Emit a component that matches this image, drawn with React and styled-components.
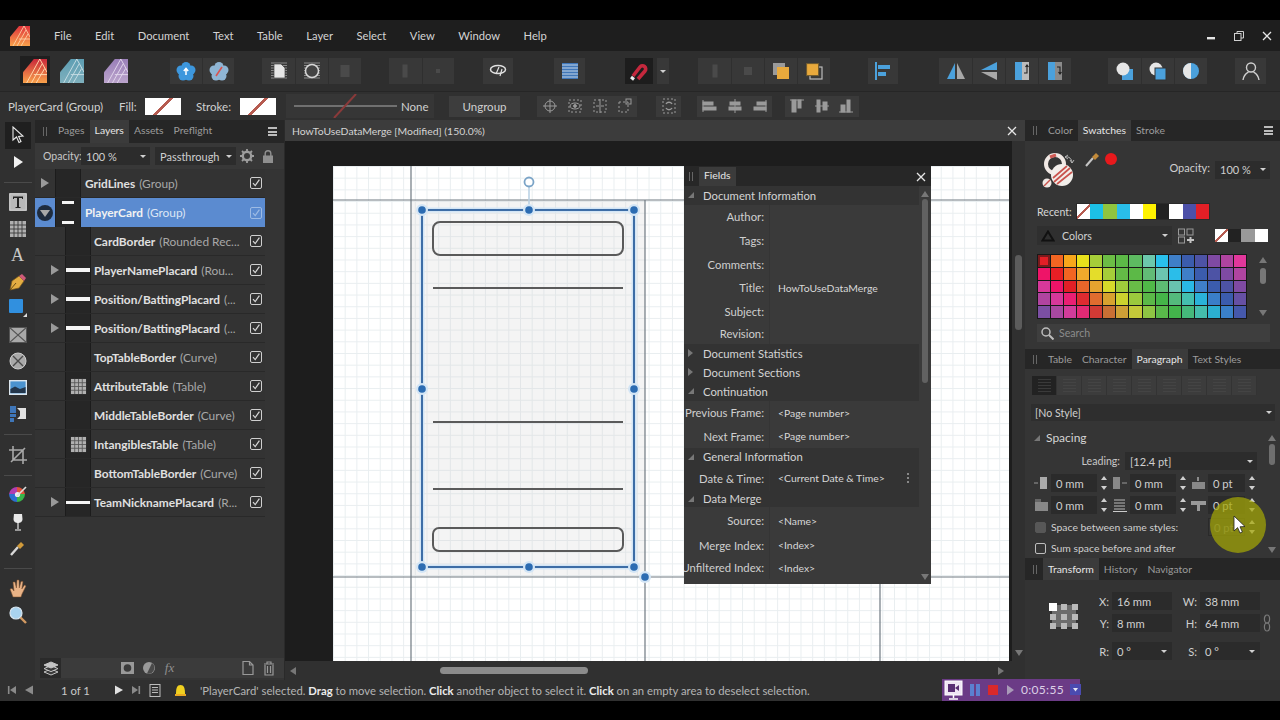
import React from "react";
import styled, { createGlobalStyle } from "styled-components";

const GlobalStyle = createGlobalStyle`
  html, body { margin: 0; padding: 0; background: #000; overflow: hidden; }
  * { box-sizing: border-box; }
  body { font-family: Lato, Roboto, "Liberation Sans", sans-serif; font-size: 11.5px; color: #c8c8c8; }
`;

const Screen = styled.div`
  position: relative;
  width: 1280px;
  height: 720px;
  padding: 20px 0 19px;
  background: #000;
  display: flex;
  flex-direction: column;
  overflow: hidden;
`;

/* ---------- top bars ---------- */
const MenuBar = styled.div`
  height: 31px;
  background: #1e1e1e;
  display: flex;
  align-items: center;
  padding-left: 10px;
  color: #d4d4d4;
  font-size: 11.2px;
`;
const MenuItems = styled.div`
  display: flex;
  gap: 23.5px;
  margin-left: 24px;
`;
const WindowButtons = styled.div`
  margin-left: auto;
  display: flex;
  align-items: center;
  gap: 18px;
  padding-right: 8px;
`;
const Toolbar = styled.div`
  height: 41px;
  background: #2e2e2e;
  display: flex;
  align-items: center;
  padding-left: 20px;
  border-bottom: 1px solid #262626;
`;
const ToolGroup = styled.div`
  display: flex;
  margin-left: ${(p) => p.$ml || 0}px;
  background: #383838;
`;
const ToolBtn = styled.div`
  width: ${(p) => p.$w || 33}px;
  height: 26px;
  display: flex;
  align-items: center;
  justify-content: center;
  background: ${(p) => p.$bg || "transparent"};
  & + & { border-left: 1px solid #2f2f2f; }
`;
const Persona = styled.div`
  width: ${(p) => p.$w}px;
  height: 30px;
  display: flex;
  align-items: center;
  justify-content: center;
  background: ${(p) => (p.$active ? "#1f1f1f" : "transparent")};
`;
const ContextBar = styled.div`
  height: 28px;
  background: #303030;
  display: flex;
  align-items: center;
  padding-left: 8px;
  color: #d0d0d0;
  white-space: nowrap;
`;
const CtxLabel = styled.span`
  width: ${(p) => p.$w}px;
  margin-left: ${(p) => p.$ml || 0}px;
  flex: none;
`;
const NoneSwatch = styled.div`
  width: ${(p) => p.$w || 36}px;
  height: ${(p) => p.$h || 17}px;
  margin-left: ${(p) => p.$ml || 0}px;
  flex: none;
  background: linear-gradient(
    135deg,
    #fff 46%,
    #b65b50 46%,
    #b65b50 54%,
    #fff 54%
  );
`;
const StrokePreview = styled.div`
  width: 148px;
  height: 24px;
  margin-left: 10px;
  background: #363636;
  display: flex;
  align-items: center;
  padding-left: 8px;
  gap: 3px;
`;
const CtxButton = styled.div`
  width: 71px;
  height: 21px;
  margin-left: 15px;
  background: #3d3d3d;
  display: flex;
  align-items: center;
  justify-content: center;
  color: #d0d0d0;
`;
const CtxGroup = styled.div`
  display: flex;
  margin-left: ${(p) => p.$ml || 0}px;
  background: #3a3a3a;
`;
const CtxBtn = styled.div`
  width: ${(p) => p.$w || 25}px;
  height: 21px;
  display: flex;
  align-items: center;
  justify-content: center;
`;

/* ---------- main columns ---------- */
const Main = styled.div`
  height: 560px;
  display: flex;
`;
const ToolColumn = styled.div`
  width: 35px;
  background: #303030;
  padding-top: 2px;
  display: flex;
  flex-direction: column;
  align-items: center;
`;
const ToolSlot = styled.div`
  width: 26px;
  height: 26.5px;
  flex: none;
  display: flex;
  align-items: center;
  justify-content: center;
  background: ${(p) => (p.$active ? "#1f1f1f" : "transparent")};
`;
const SerifGlyph = styled.span`
  font-family: "Liberation Serif", serif;
  font-size: 18px;
  color: #c8c8c8;
`;
const ToolSep = styled.div`
  width: 28px;
  height: 1px;
  margin: 6.5px 0;
  flex: none;
  background: #4a4a4a;
`;
const LayersPanel = styled.div`
  width: 250px;
  background: #343434;
  display: flex;
  flex-direction: column;
  border-right: 1px solid #2a2a2a;
`;
const TabBar = styled.div`
  height: ${(p) => p.$h || 21}px;
  flex: none;
  display: flex;
  align-items: stretch;
  background: #262626;
  padding-left: 6px;
`;
const Grip = styled.div`
  width: 4px;
  height: 9px;
  margin: auto 6px auto 2px;
  border-left: 1px solid #666;
  border-right: 1px solid #666;
  flex: none;
`;
const Tab = styled.div`
  padding: 0 5px ${(p) => p.$lift || 0}px;
  display: flex;
  align-items: center;
  font-size: 10.4px;
  color: ${(p) => (p.$active ? "#e6e6e6" : "#9c9c9c")};
  background: ${(p) => (p.$active ? "#3b3b3b" : "transparent")};
  white-space: nowrap;
`;
const TabMenu = styled.div`
  margin: auto 7px auto auto;
  width: 9px;
  height: 9px;
  border-top: 2px solid #bbb;
  border-bottom: 2px solid #bbb;
  background: linear-gradient(#bbb, #bbb) center / 100% 2px no-repeat;
`;
const LayerOptions = styled.div`
  height: 26px;
  flex: none;
  display: flex;
  align-items: center;
  padding-left: 8px;
  background: #383838;
`;
const OptionLabel = styled.span`
  width: 38px;
  flex: none;
  font-size: 10.5px;
`;
const OptionIcon = styled.span`
  display: flex;
  margin-left: ${(p) => p.$ml}px;
`;
const DarkSelect = styled.div`
  height: ${(p) => p.$h || 18}px;
  width: ${(p) => p.$w}px;
  margin-left: ${(p) => p.$ml || 0}px;
  flex: none;
  display: flex;
  align-items: center;
  justify-content: space-between;
  padding: 0 4px 0 5px;
  background: #2c2c2c;
  color: #cfcfcf;
  font-size: 11px;
`;
const Caret = styled.span`
  width: 0;
  height: 0;
  flex: none;
  border-left: 3px solid transparent;
  border-right: 3px solid transparent;
  border-top: 3.5px solid #d0d0d0;
`;
const LayerList = styled.div`
  flex: 1;
  padding-right: 19px;
`;
const LayerRow = styled.div`
  height: 29px;
  display: flex;
  align-items: stretch;
  background: ${(p) => (p.$selected ? "#5b8bd0" : "#333")};
  border-bottom: ${(p) => (p.$selected ? "0" : "1px solid #292929")};
`;
const ArrowSlot = styled.div`
  width: ${(p) => (p.$sub ? 30 : 20)}px;
  flex: none;
  display: flex;
  align-items: center;
  justify-content: ${(p) => (p.$sub ? "flex-end" : "center")};
  padding-right: ${(p) => (p.$sub ? 6 : 0)}px;
`;
const TriRight = styled.span`
  width: 0;
  height: 0;
  border-top: 5px solid transparent;
  border-bottom: 5px solid transparent;
  border-left: 8px solid #9a9a9a;
`;
const ExpandedDot = styled.span`
  width: 16px;
  height: 16px;
  border-radius: 50%;
  background: #1f2c3e;
  display: flex;
  align-items: center;
  justify-content: center;
  &::after {
    content: "";
    border-left: 5px solid transparent;
    border-right: 5px solid transparent;
    border-top: 7px solid #a8a8a8;
    margin-top: 2px;
  }
`;
const Thumb = styled.div`
  width: 26px;
  flex: none;
  background: #262626;
  border-left: 1px solid #1c1c1c;
  border-right: 1px solid #1c1c1c;
  display: flex;
  flex-direction: column;
  align-items: center;
  justify-content: ${(p) => (p.$card ? "space-between" : "center")};
  padding: ${(p) => (p.$card ? "3px 0" : "0")};
`;
const ThumbBar = styled.div`
  width: ${(p) => p.$w || 24}px;
  height: ${(p) => p.$h || 4}px;
  background: #f4f4f4;
`;
const LayerName = styled.div`
  margin-left: ${(p) => (p.$sub ? 3 : 4)}px;
  display: flex;
  align-items: center;
  white-space: nowrap;
  font-size: 11.9px;
  gap: 4px;
`;
const NameStrong = styled.b`
  font-weight: 700;
  color: ${(p) => (p.$selected ? "#f2f2f2" : "#e0e0e0")};
`;
const NameType = styled.span`
  color: ${(p) => (p.$selected ? "#dbe6f5" : "#a8a8a8")};
`;
const CheckBox = styled.div`
  width: 12px;
  height: 12px;
  margin: auto 3px auto auto;
  flex: none;
  border: 1px solid ${(p) => (p.$faded ? "#9dbbe4" : "#cfcfcf")};
  border-radius: 2px;
  display: flex;
  align-items: center;
  justify-content: center;
`;
const LayerFooter = styled.div`
  height: 20px;
  margin: 0 0 2px 5px;
  flex: none;
  display: flex;
  align-items: center;
  background: #3b3b3b;
`;
const FooterBtn = styled.div`
  width: ${(p) => p.$w || 21}px;
  height: 20px;
  margin-left: ${(p) => p.$ml || 0}px;
  display: flex;
  align-items: center;
  justify-content: center;
  background: ${(p) => (p.$active ? "#2a2a2a" : "transparent")};
  color: #8f8f8f;
  font-family: "Liberation Serif", serif;
  font-style: italic;
  font-size: 13px;
`;

/* ---------- canvas ---------- */
const CanvasColumn = styled.div`
  width: 740px;
  display: flex;
  flex-direction: column;
`;
const DocTab = styled.div`
  height: 21px;
  flex: none;
  display: flex;
  align-items: center;
  justify-content: space-between;
  padding: 0 8px 0 7px;
  background: #3c3c3c;
  color: #d4d4d4;
  font-size: 10.4px;
`;
const CanvasMiddle = styled.div`
  height: 520px;
  display: flex;
`;
const Pasteboard = styled.div`
  width: 727px;
  padding: 25px 3px 0 48px;
  background: #1d1d1d;
`;
const Page = styled.div`
  position: relative;
  width: 676px;
  height: 495px;
  background-color: #fff;
  background-image: linear-gradient(#e9eef0 1px, transparent 1px),
    linear-gradient(90deg, #e9eef0 1px, transparent 1px);
  background-size: 11.7px 11.7px;
`;
const PageDrawing = styled.svg`
  position: absolute;
  inset: 0;
  display: block;
`;
const VBar = styled.div`
  width: 13px;
  background: #303030;
  display: flex;
  flex-direction: column;
  align-items: center;
  padding: 0 0 5px;
`;
const VThumb = styled.div`
  width: 7px;
  height: 75px;
  margin-top: 114px;
  border-radius: 4px;
  background: #5c5c5c;
`;
const ScrollTriDown = styled.span`
  margin-top: auto;
  border-left: 4px solid transparent;
  border-right: 4px solid transparent;
  border-top: 6px solid #777;
`;
const ScrollTriUp = styled.span`
  border-left: 4px solid transparent;
  border-right: 4px solid transparent;
  border-bottom: 6px solid #777;
`;
const HBar = styled.div`
  height: 19px;
  flex: none;
  display: flex;
  align-items: center;
  background: #303030;
  padding: 0 21px 0 5px;
`;
const TriLeft = styled.span`
  border-top: 4px solid transparent;
  border-bottom: 4px solid transparent;
  border-right: 6px solid #777;
`;
const TriRightSmall = styled.span`
  margin-left: auto;
  border-top: 4px solid transparent;
  border-bottom: 4px solid transparent;
  border-left: 6px solid #777;
`;
const HThumb = styled.div`
  width: 148px;
  height: 7px;
  margin-left: 144px;
  border-radius: 4px;
  background: #8b8b8b;
`;

/* floating Fields studio panel */
const FieldsPanel = styled.div`
  position: absolute;
  left: 351px;
  top: 0;
  width: 247px;
  height: 418px;
  background: #3a3a3a;
  display: flex;
  flex-direction: column;
  font-size: 11.3px;
  overflow: hidden;
`;
const FieldsHead = styled.div`
  height: 20px;
  flex: none;
  display: flex;
  background: #272727;
  padding-left: 3px;
  padding-top: 1px;
`;
const FieldsClose = styled.span`
  margin: auto 5px auto auto;
  display: flex;
`;
const FieldsBody = styled.div`
  display: flex;
  flex: 1;
`;
const FieldsRows = styled.div`
  width: 235px;
`;
const SectionRow = styled.div`
  height: ${(p) => p.$h || 19}px;
  display: flex;
  align-items: center;
  background: ${(p) => (p.$dark ? "#333" : "transparent")};
  color: #d4d4d4;
  padding-left: 4px;
`;
const SectionArrow = styled.span`
  width: 0;
  height: 0;
  margin-right: ${(p) => (p.$open ? 9 : 10)}px;
  ${(p) =>
    p.$open
      ? `border-left: 6px solid transparent; border-bottom: 6px solid #777;`
      : `border-top: 4px solid transparent; border-bottom: 4px solid transparent; border-left: 5px solid #777;`}
`;
const FieldRow = styled.div`
  height: ${(p) => p.$h || 23.4}px;
  display: flex;
  align-items: center;
  background: ${(p) => (p.$dark ? "#333" : "transparent")};
`;
const FieldLabel = styled.div`
  width: 80px;
  flex: none;
  display: flex;
  justify-content: flex-end;
  overflow: hidden;
  white-space: nowrap;
  color: #cfcfcf;
`;
const FieldValue = styled.div`
  margin-left: 5px;
  padding-left: 8px;
  height: 100%;
  flex: 1;
  display: flex;
  align-items: center;
  justify-content: space-between;
  padding-right: 10px;
  font-size: 10.4px;
  color: #d8d8d8;
  border-left: 1px solid #353535;
`;
const DotsV = styled.span`
  width: 2px;
  height: 11px;
  background: repeating-linear-gradient(#888 0 2px, transparent 2px 4px);
`;
const FieldsScroll = styled.div`
  width: 12px;
  display: flex;
  flex-direction: column;
  align-items: center;
  padding: 5px 0 4px;
`;
const FieldsThumb = styled.div`
  width: 6px;
  height: 184px;
  margin-top: 2px;
  background: #616161;
  border-radius: 3px;
`;

/* ---------- right hand panels ---------- */
const RightColumn = styled.div`
  width: 255px;
  display: flex;
  flex-direction: column;
  background: #353535;
  font-size: 10.6px;
`;
const SwatchPanel = styled.div`
  height: 229px;
  flex: none;
  display: flex;
  flex-direction: column;
`;
const SwatchHead = styled.div`
  height: 57px;
  flex: none;
  display: flex;
  align-items: center;
  padding: 0 10px 0 17px;
`;
const RedDot = styled.span`
  width: 12px;
  height: 12px;
  margin: -22px 0 0 4px;
  border-radius: 50%;
  background: #e8191c;
`;
const DropperWrap = styled.span`
  margin: -22px 0 0 9px;
  display: block;
`;
const HeadLabel = styled.span`
  margin-left: auto;
  margin-top: -4px;
  color: #d0d0d0;
  font-size: 11px;
`;
const RecentRow = styled.div`
  display: flex;
  align-items: center;
  height: 15px;
  margin: 6px 0 0 12px;
  color: #d6d6d6;
`;
const RecentLabel = styled.span`
  width: 40px;
  flex: none;
`;
const RecentStrip = styled.div`
  display: flex;
  outline: 1px solid #2a2a2a;
`;
const Chip = styled.div`
  width: 13.2px;
  height: 15px;
  background: ${(p) => p.$c};
`;
const PaletteRow = styled.div`
  display: flex;
  align-items: center;
  height: 19px;
  margin: 7px 0 0 12px;
`;
const PaletteSelect = styled.div`
  width: 135px;
  height: 19px;
  flex: none;
  background: #2f2f2f;
  display: flex;
  align-items: center;
  padding: 0 4px 0 4px;
  gap: 7px;
  color: #cfcfcf;
`;
const PaletteCaret = styled(Caret)`
  margin-left: auto;
`;
const PaletteMenuWrap = styled.span`
  display: flex;
  margin-left: 6px;
`;
const MiniChips = styled.div`
  display: flex;
  margin-left: 21px;
`;
const MiniChip = styled.div`
  width: 13.2px;
  height: 13px;
  background: ${(p) => p.$c};
`;
const SwatchArea = styled.div`
  display: flex;
  margin: 9px 0 0 12px;
`;
const SwatchGrid = styled.div`
  width: 210px;
  height: 65px;
  display: grid;
  grid-template-columns: repeat(16, 1fr);
  grid-template-rows: repeat(5, 1fr);
  background: #181818;
  gap: 1px;
  padding: 1px;
`;
const Swatch = styled.div`
  background: ${(p) => p.$c};
  box-shadow: ${(p) => (p.$sel ? "inset 0 0 0 2px #7a1a1c" : "none")};
`;
const SwatchScroll = styled.div`
  width: 10px;
  height: 65px;
  margin-left: 11px;
  display: flex;
  flex-direction: column;
  align-items: center;
  padding: 3px 0;
`;
const SwatchThumb = styled.div`
  width: 6px;
  height: 16px;
  margin-top: 5px;
  border-radius: 3px;
  background: #777;
`;
const SearchBox = styled.div`
  height: 18px;
  margin: 5px 10px 0 12px;
  display: flex;
  align-items: center;
  gap: 5px;
  padding-left: 4px;
  background: #3e3e3e;
  color: #8c8c8c;
`;
const ParagraphPanel = styled.div`
  height: 209px;
  flex: none;
  display: flex;
  flex-direction: column;
`;
const AlignRow = styled.div`
  display: flex;
  height: 19px;
  margin: 7px 0 0 7px;
`;
const AlignBtn = styled.div`
  width: 25px;
  background-color: ${(p) => (p.$active ? "#222" : "#3c3c3c")};
  background-image: repeating-linear-gradient(
    ${(p) => (p.$active ? "#3a3a3a" : "#444")} 0 1px,
    transparent 1px 3px
  );
  background-size: 13px 13px;
  background-position: center;
  background-repeat: no-repeat;
  border-right: 1px solid #333;
`;
const StyleSelect = styled.div`
  height: 17px;
  margin: 9px 5px 0 6px;
  display: flex;
  align-items: center;
  justify-content: space-between;
  padding: 0 3px 0 4px;
  background: #2e2e2e;
  color: #d0d0d0;
`;
const SpacingWrap = styled.div`
  flex: 1;
  display: flex;
  margin-top: 7px;
`;
const SpacingBody = styled.div`
  width: 240px;
  display: flex;
  flex-direction: column;
  padding-left: 7px;
`;
const SpacingHead = styled.div`
  height: 17px;
  display: flex;
  align-items: center;
  color: #d4d4d4;
  font-size: 12px;
  gap: 6px;
  padding-left: 2px;
  margin-top: 1px;
`;
const SpacingArrow = styled(SectionArrow)`
  margin-right: 0;
`;
const LeadingRow = styled.div`
  display: flex;
  align-items: center;
  justify-content: flex-end;
  height: 18px;
  margin-top: 6px;
  padding-right: 8px;
  gap: 5px;
`;
const SpinRow = styled.div`
  display: flex;
  align-items: center;
  height: 18px;
  margin-top: 4px;
`;
const SpinIcon = styled.div`
  width: ${(p) => p.$w || 19}px;
  margin-left: ${(p) => p.$ml || 0}px;
  display: flex;
  justify-content: center;
  flex: none;
`;
const SpinInput = styled.div`
  width: ${(p) => p.$w || 46}px;
  height: 18px;
  margin-left: ${(p) => p.$ml || 0}px;
  flex: none;
  display: flex;
  align-items: center;
  padding-left: 5px;
  background: ${(p) => (p.$off ? "transparent" : "#2b2b2b")};
  color: ${(p) => (p.$off ? "#777" : "#cfcfcf")};
  border: ${(p) => (p.$off ? "1px solid #2a2a2a" : "0")};
  font-size: 11.2px;
`;
const Spinner = styled.div`
  width: 8px;
  height: 14px;
  margin-left: 3px;
  flex: none;
  display: flex;
  flex-direction: column;
  justify-content: space-between;
  align-items: center;
  &::before {
    content: "";
    border-left: 3px solid transparent;
    border-right: 3px solid transparent;
    border-bottom: 4px solid #cfcfcf;
  }
  &::after {
    content: "";
    border-left: 3px solid transparent;
    border-right: 3px solid transparent;
    border-top: 4px solid #cfcfcf;
  }
`;
const Tick = styled.span`
  width: 11px;
  height: 11px;
  margin-left: 3px;
  margin-right: 5px;
  flex: none;
  background: ${(p) => (p.$off ? "#575757" : "transparent")};
  border: 1px solid ${(p) => (p.$off ? "#575757" : "#bdbdbd")};
  border-radius: 2px;
`;
const SpaceRow = styled.div`
  display: flex;
  align-items: center;
  height: 18px;
  margin-top: ${(p) => p.$mt || 4}px;
  color: ${(p) => p.$c || "#cfcfcf"};
  font-size: 10.4px;
  white-space: nowrap;
`;
const SpaceLabel = styled.span`
  width: 157px;
  flex: none;
`;
const SpacingScroll = styled.div`
  width: 10px;
  margin-left: 2px;
  display: flex;
  flex-direction: column;
  align-items: center;
  padding: 7px 0 5px;
`;
const SpacingThumb = styled.div`
  width: 6px;
  height: 21px;
  margin-top: 3px;
  border-radius: 3px;
  background: #6e6e6e;
`;
const TransformPanel = styled.div`
  flex: 1;
  display: flex;
  flex-direction: column;
  background: #333;
`;
const TransformBody = styled.div`
  display: flex;
  padding: 12px 0 0 22px;
`;
const Anchor = styled.div`
  width: 34px;
  height: 30px;
  margin: 9px 18px 0 0;
  flex: none;
  display: grid;
  grid-template-columns: repeat(3, 1fr);
  place-items: center;
  background: linear-gradient(#6c6c6c, #6c6c6c) center / 24px 22px no-repeat;
`;
const AnchorDot = styled.span`
  width: ${(p) => (p.$on ? 8 : 6)}px;
  height: ${(p) => (p.$on ? 8 : 6)}px;
  background: ${(p) => (p.$on ? "#fff" : "#b9b9b9")};
`;
const TransformGrid = styled.div`
  display: grid;
  grid-template-columns: 10px 60px 22px 60px 14px;
  column-gap: 3px;
  row-gap: 4px;
  align-items: center;
  color: #cfcfcf;
  font-size: 11.2px;
  margin-top: ${(p) => p.$mt || 0}px;
`;
const TfLabel = styled.span`
  text-align: right;
`;
const TfInput = styled.div`
  height: 18px;
  display: flex;
  align-items: center;
  justify-content: space-between;
  padding: 0 5px;
  background: #2b2b2b;
  color: #d0d0d0;
`;

/* ---------- status bar ---------- */
const StatusBar = styled.div`
  height: 21px;
  flex: none;
  display: flex;
  align-items: center;
  background: #303030;
  color: #b4b4b4;
  font-size: 11.3px;
  padding-left: 6px;
  padding-bottom: 1px;
  white-space: nowrap;
`;
const PageOf = styled.span`
  width: 26px;
  margin: 0 26px 0 26px;
  color: #c8c8c8;
`;
const StatusIcon = styled.span`
  display: flex;
  margin-right: ${(p) => p.$mr || 0}px;
`;
const StatusText = styled.span`
  margin-left: 1px;
  b { color: #ececec; font-weight: 700; }
`;
const Recorder = styled.div`
  height: 22px;
  margin: -1px 200px 0 auto;
  width: 138px;
  display: flex;
  align-items: center;
  padding-left: 2px;
  gap: 6px;
  background: #6b3b86;
  color: #dcd0e6;
  font-size: 12px;
  letter-spacing: 0.3px;
`;

/* ---------- overlay: tutorial mouse cursor ---------- */
const CursorSpot = styled.div`
  position: absolute;
  left: 1210px;
  top: 497px;
  width: 56px;
  height: 56px;
  border-radius: 50%;
  background: rgba(165, 168, 5, 0.72);
`;
const CursorArrow = styled.svg`
  position: absolute;
  left: 1233px;
  top: 515px;
`;

const Ico = styled.svg`
  display: block;
  flex: none;
`;

/* ---------- icons ---------- */
const AffinityLogo = ({ id, size = 20, from, to, line }) => (
  <Ico width={size} height={size} viewBox="0 0 20 20">
    <defs>
      <linearGradient id={id} x1="0" y1="0" x2="0" y2="1">
        <stop offset="0" stopColor={from} />
        <stop offset="1" stopColor={to} />
      </linearGradient>
    </defs>
    <polygon points="9,0 20,0 20,20 0,20 0,11" fill={`url(#${id})`} />
    <path d="M14 0 L3 20 M14 0 L20 11 M9 13 H20 M7 20 L16 4 M11 20 L18 8" stroke={line} strokeWidth="0.8" fill="none" />
  </Ico>
);
const Flower = ({ fill, mark }) => (
  <Ico width="20" height="20" viewBox="0 0 20 20">
    <g fill={fill}>
      <circle cx="10" cy="5.5" r="4.5" />
      <circle cx="15" cy="9" r="4.5" />
      <circle cx="13" cy="15" r="4.5" />
      <circle cx="7" cy="15" r="4.5" />
      <circle cx="5" cy="9" r="4.5" />
      <circle cx="10" cy="10" r="5" />
    </g>
    {mark === "up" ? (
      <path d="M10 14 V8 M7.8 10 L10 7.5 12.2 10" stroke="#fff" strokeWidth="1.5" fill="none" />
    ) : (
      <path d="M7 15 L13 6" stroke="#d9534f" strokeWidth="1.6" />
    )}
  </Ico>
);
const DocLines = ({ round }) => (
  <Ico width="18" height="18" viewBox="0 0 18 18">
    {[1, 3.5, 6, 8.5, 11, 13.5, 16].map((y) => (
      <path key={y} d={`M1 ${y} H17`} stroke="#8a8a8a" strokeWidth="1" />
    ))}
    {round ? (
      <circle cx="9" cy="9" r="6.5" fill="#444" stroke="#d8d8d8" strokeWidth="1.5" />
    ) : (
      <path d="M4 2 H11 L15 6 V16 H4 Z" fill="#e6e6e6" stroke="#444" strokeWidth=".7" />
    )}
  </Ico>
);
const FaintIcon = ({ w = 10, h = 16 }) => (
  <Ico width="18" height="18" viewBox="0 0 18 18">
    <rect x={9 - w / 2} y={9 - h / 2} width={w} height={h} fill="#4a4a4a" />
  </Ico>
);
const Lasso = () => (
  <Ico width="18" height="14" viewBox="0 0 18 14">
    <ellipse cx="9" cy="5.5" rx="7.5" ry="4" fill="none" stroke="#e0e0e0" strokeWidth="1.5" />
    <path d="M7 10 L10 3 M11 12 L13 5" stroke="#e0e0e0" strokeWidth="1.2" />
  </Ico>
);
const BlueLines = () => (
  <Ico width="18" height="18" viewBox="0 0 18 18">
    <rect x="1" y="1" width="16" height="16" fill="#3f76b8" />
    {[3, 6, 9, 12, 15].map((y) => (
      <path key={y} d={`M1 ${y} H17`} stroke="#c6d6e8" strokeWidth="1" />
    ))}
  </Ico>
);
const Magnet = () => (
  <Ico width="20" height="20" viewBox="0 0 20 20">
    <path d="M4 15 L11 6 a3.2 3.2 0 0 1 5 4 L9 18" fill="none" stroke="#c5283d" strokeWidth="3.6" />
    <path d="M2 16 L5 18.5" stroke="#eee" strokeWidth="3" />
  </Ico>
);
const Stack = ({ front }) => (
  <Ico width="18" height="18" viewBox="0 0 18 18">
    {front ? (
      <>
        <rect x="1" y="1" width="12" height="12" fill="#9a9a9a" />
        <rect x="5" y="5" width="12" height="12" fill="#e8a93c" />
      </>
    ) : (
      <>
        <rect x="5" y="5" width="12" height="12" fill="none" stroke="#bbb" strokeWidth="1.2" />
        <rect x="1.6" y="1.6" width="12" height="12" fill="#e8a93c" stroke="#6e5a30" />
      </>
    )}
  </Ico>
);
const AlignBlue = () => (
  <Ico width="18" height="20" viewBox="0 0 18 20">
    <path d="M2 1 V19" stroke="#4ba1dc" strokeWidth="2" />
    <rect x="4" y="4" width="12" height="4" fill="#4ba1dc" />
    <rect x="4" y="11" width="8" height="4" fill="#4ba1dc" />
  </Ico>
);
const FlipH = () => (
  <Ico width="20" height="20" viewBox="0 0 20 20">
    <polygon points="9,2 9,18 1,18" fill="#4ba1dc" />
    <polygon points="11,2 11,18 19,18" fill="#a8a8a8" />
  </Ico>
);
const FlipV = () => (
  <Ico width="20" height="20" viewBox="0 0 20 20">
    <polygon points="18,1 18,9 2,9" fill="#4ba1dc" />
    <polygon points="18,11 18,19 2,11" fill="#a8a8a8" />
  </Ico>
);
const Rotate = ({ ccw }) => (
  <Ico width="18" height="20" viewBox="0 0 18 20">
    <rect x="2" y="1" width="7" height="18" fill="#4ba1dc" />
    <path d="M9 1 H16 V19 H9 V8" fill={ccw ? "#bbb" : "#8a8a8a"} />
    <path d={ccw ? "M11 12 H14 V4 M12.5 6 L14 4 15.5 6" : "M11 6 H14 V13 M12.5 11 L14 13 15.5 11"} fill="none" stroke="#222" strokeWidth="1.1" />
  </Ico>
);
const BoolIcon = ({ kind }) => (
  <Ico width="20" height="20" viewBox="0 0 20 20">
    {kind === 0 && (
      <>
        <rect x="7" y="8" width="11" height="11" fill="#4ba1dc" />
        <circle cx="8" cy="8" r="6.5" fill="#e6e6e6" />
      </>
    )}
    {kind === 1 && (
      <>
        <circle cx="8" cy="8" r="6.5" fill="#e6e6e6" />
        <rect x="7" y="7" width="11" height="12" fill="#4ba1dc" stroke="#333" />
      </>
    )}
    {kind === 2 && (
      <>
        <circle cx="10" cy="10" r="8" fill="#4ba1dc" />
        <path d="M10 2 a8 8 0 0 0 -8 8 H10 Z M2 10 a8 8 0 0 0 8 8 V10 Z" fill="#e6e6e6" />
      </>
    )}
  </Ico>
);
const Person = () => (
  <Ico width="20" height="20" viewBox="0 0 20 20" fill="none" stroke="#cfcfcf" strokeWidth="1.4">
    <circle cx="10" cy="6.5" r="4.5" />
    <path d="M2 19 C3 13 6 12 7.5 11 M18 19 C17 13 14 12 12.5 11" />
  </Ico>
);
const Win = {
  Min: () => (
    <Ico width="9" height="8" viewBox="0 0 9 8">
      <rect y="5" width="8" height="2.4" fill="#e6e6e6" />
    </Ico>
  ),
  Max: () => (
    <Ico width="10" height="10" viewBox="0 0 10 10" fill="none" stroke="#d0d0d0">
      <rect x=".5" y="2.5" width="6.5" height="7" />
      <path d="M3 2.5 V.5 H9.5 V7 H7" />
    </Ico>
  ),
  Close: () => (
    <Ico width="10" height="10" viewBox="0 0 10 10">
      <path d="M1 1 L9 9 M9 1 L1 9" stroke="#e6e6e6" strokeWidth="1.3" />
    </Ico>
  ),
};
const CtxIcon = ({ kind }) => (
  <Ico width="16" height="16" viewBox="0 0 16 16" fill="none" stroke="#9a9a9a" strokeWidth="1">
    {kind === "circle" && <><circle cx="8" cy="8" r="5" /><path d="M8 1 V15 M1 8 H15" /></>}
    {kind === "eye" && <><rect x="2" y="2" width="12" height="12" strokeDasharray="2 2" /><ellipse cx="8" cy="8" rx="5" ry="3" /><circle cx="8" cy="8" r="1.4" fill="#9a9a9a" /></>}
    {kind === "split" && <><rect x="2" y="2" width="12" height="12" strokeDasharray="2 2" /><path d="M8 1 V15 M4 8 H7 M9 8 H12" /></>}
    {kind === "crop" && <><rect x="2" y="4" width="9" height="10" strokeDasharray="2 2" /><rect x="9" y="1" width="5" height="5" /></>}
    {kind === "sync" && <><rect x="2" y="1" width="12" height="14" strokeDasharray="2 2" /><path d="M5 6 a3.5 3.5 0 0 1 6 0 M11 10 a3.5 3.5 0 0 1 -6 0" strokeWidth="1.4" /></>}
    {kind === "al" && <><path d="M1 2 V14" /><rect x="1" y="4" width="10" height="3" fill="#9a9a9a" /><rect x="1" y="9" width="13" height="3" fill="#9a9a9a" /></>}
    {kind === "ac" && <><path d="M8 1 V15" /><rect x="3" y="4" width="10" height="3" fill="#9a9a9a" /><rect x="2" y="9" width="12" height="3" fill="#9a9a9a" /></>}
    {kind === "ar" && <><path d="M14 2 V14" /><rect x="5" y="4" width="9" height="3" fill="#9a9a9a" /><rect x="2" y="9" width="12" height="3" fill="#9a9a9a" /></>}
    {kind === "at" && <><path d="M1 2 H15" /><rect x="3" y="2" width="4" height="12" fill="#9a9a9a" /><rect x="9" y="2" width="3" height="8" fill="#9a9a9a" /></>}
    {kind === "am" && <><path d="M1 8 H15" /><rect x="3" y="2" width="3" height="12" fill="#9a9a9a" /><rect x="9" y="4" width="4" height="8" fill="#9a9a9a" /></>}
    {kind === "ab" && <><path d="M1 14 H15" /><rect x="3" y="7" width="4" height="7" fill="#9a9a9a" /><rect x="9" y="2" width="3" height="12" fill="#9a9a9a" /></>}
  </Ico>
);
const Pointer = () => (
  <Ico width="14" height="18" viewBox="0 0 14 18">
    <path d="M2 1 L2 14 L5.5 11 L8 16.5 L10 15.5 L7.6 10.4 L12 10 Z" fill="none" stroke="#e8e8e8" strokeWidth="1.1" />
  </Ico>
);
const NodePointer = () => (
  <Ico width="12" height="14" viewBox="0 0 12 14">
    <path d="M2 1 L2 13 L11 7 Z" fill="#f2f2f2" />
  </Ico>
);
const TableIcon = ({ size = 18, line = "#3a3a3a" }) => (
  <Ico width={size} height={size} viewBox="0 0 18 18">
    <rect x="1" y="1" width="16" height="16" fill="#b0b0b0" />
    {[5, 9, 13].map((v) => (
      <path key={v} d={`M1 ${v} H17 M${v} 1 V17`} stroke={line} strokeWidth=".9" />
    ))}
  </Ico>
);
const ToolIcons = {
  Text: () => (
    <Ico width="18" height="18" viewBox="0 0 18 18">
      <rect x=".7" y=".7" width="16.6" height="16.6" fill="#b8b8b8" stroke="#ddd" />
      <path d="M4 3.6 H14 V6 H13 V5 H10 V14 H11.5 V15 H6.5 V14 H8 V5 H5 V6 H4 Z" fill="#222" />
    </Ico>
  ),
  Frame: () => (
    <Ico width="18" height="16" viewBox="0 0 18 16">
      <rect x=".5" y=".5" width="17" height="15" fill="#a9a9a9" stroke="#555" />
      <path d="M0 0 L18 16 M18 0 L0 16" stroke="#555" strokeWidth="1.2" />
    </Ico>
  ),
  Pen: () => (
    <Ico width="18" height="18" viewBox="0 0 18 18">
      <path d="M1 17 L3 8 L10 3 L15 8 L10 15 Z" fill="#e3ad42" stroke="#7a5a1b" strokeWidth=".7" />
      <path d="M1 17 L7 10" stroke="#5a4212" strokeWidth=".9" />
      <path d="M10 3 L13 1 L17 5 L15 8 Z" fill="#cf5a7a" />
    </Ico>
  ),
  Rect: () => (
    <Ico width="20" height="18" viewBox="0 0 20 18">
      <rect x="1" y="0" width="14" height="14" rx="1" fill="#3190df" />
      <polygon points="19,14 19,18 15,18" fill="#ddd" />
    </Ico>
  ),
  Ellipse: () => (
    <Ico width="18" height="18" viewBox="0 0 18 18">
      <circle cx="9" cy="9" r="8" fill="#a9a9a9" stroke="#ccc" />
      <path d="M4 4 L14 14 M14 4 L4 14" stroke="#4a4a4a" strokeWidth="1.4" />
    </Ico>
  ),
  Image: () => (
    <Ico width="18" height="15" viewBox="0 0 18 15">
      <rect width="18" height="15" fill="#dce6ee" />
      <rect x="1.4" y="1.4" width="15.2" height="12" fill="#4b93cf" />
      <path d="M1.4 13 V9 L6 6.5 L11 9 L16.6 7 V13 Z" fill="#23364b" />
    </Ico>
  ),
  Place: () => (
    <Ico width="18" height="17" viewBox="0 0 18 17">
      <rect x="1" y="0" width="6" height="7" fill="#3f76b8" />
      <rect x="1" y="8" width="6" height="3" fill="#3f76b8" />
      <rect x="1" y="12" width="4" height="4" fill="#3f76b8" />
      <path d="M8 2 H17 V13 H8 L11 10 V5 Z" fill="#e2e2e2" />
    </Ico>
  ),
  Crop: () => (
    <Ico width="18" height="18" viewBox="0 0 18 18" fill="none" stroke="#a8a8a8">
      <path d="M4 0 V14 H18 M0 4 H14 V18 M2 16 L16 2" strokeWidth="1.6" />
    </Ico>
  ),
  Wheel: () => (
    <Ico width="18" height="18" viewBox="0 0 18 18">
      <path d="M8 8 L8 1 A8 8 0 0 1 16 8 Z" fill="#e0533a" />
      <path d="M8 8 L16 8 A8 8 0 0 1 8 16 Z" fill="#39b54a" />
      <path d="M8 8 L8 16 A8 8 0 0 1 0 8 Z" fill="#2e6fd0" />
      <path d="M8 8 L0 8 A8 8 0 0 1 8 1 Z" fill="#b03cb0" />
      <circle cx="8.5" cy="8.5" r="2.6" fill="#eee" />
      <path d="M8 10 L17 1" stroke="#ddd" strokeWidth="1.6" />
    </Ico>
  ),
  Glass: () => (
    <Ico width="12" height="18" viewBox="0 0 12 18">
      <path d="M2 1 H10 L10.5 6 C10.5 9 8 10 6 10 C4 10 1.5 9 1.5 6 Z" fill="#e8e8e8" />
      <path d="M6 10 V16 M3 17 H9" stroke="#bbb" strokeWidth="1.6" />
    </Ico>
  ),
  Dropper: () => (
    <Ico width="18" height="18" viewBox="0 0 18 18">
      <path d="M2 16 L9 8" stroke="#d8d8d8" strokeWidth="2.4" />
      <path d="M8 7 L12 3 L15 6 L11 10 Z" fill="#d09a3a" />
    </Ico>
  ),
  Hand: () => (
    <Ico width="18" height="19" viewBox="0 0 18 19">
      <path d="M4 18 L1 10 L3 9.4 L5 12 L4 3 H6 L7.4 9 L8 1 H10 L10.3 9 L12 2.4 H14 L12.8 10 L15.5 6 L17 7 L13 15 L12 18 Z" fill="#e9b387" stroke="#7a4d2b" strokeWidth=".5" />
    </Ico>
  ),
  Zoom: () => (
    <Ico width="18" height="18" viewBox="0 0 18 18">
      <circle cx="7" cy="7" r="6" fill="#a9d3ef" stroke="#d8e6f0" strokeWidth="1.2" />
      <path d="M11.5 11.5 L17 17" stroke="#d39a62" strokeWidth="2.4" />
    </Ico>
  ),
};
const Tick2 = ({ c = "#d8d8d8" }) => (
  <Ico width="10" height="10" viewBox="0 0 10 10">
    <path d="M2 5.2 L4.2 7.6 L8.4 1.6" fill="none" stroke={c} strokeWidth="1.2" />
  </Ico>
);
const Gear = () => (
  <Ico width="14" height="14" viewBox="0 0 14 14">
    <circle cx="7" cy="7" r="4.2" fill="none" stroke="#9d9d9d" strokeWidth="2.4" />
    <path d="M7 0 V3 M7 11 V14 M0 7 H3 M11 7 H14 M2 2 L4 4 M10 10 L12 12 M2 12 L4 10 M10 4 L12 2" stroke="#9d9d9d" strokeWidth="1.8" />
  </Ico>
);
const Lock = () => (
  <Ico width="10" height="13" viewBox="0 0 10 13">
    <rect y="5.5" width="10" height="7.5" fill="#8f8f8f" />
    <path d="M2.2 6 V3.5 a2.8 2.8 0 0 1 5.6 0 V6" fill="none" stroke="#8f8f8f" strokeWidth="1.4" />
  </Ico>
);
const FootIcon = ({ kind }) => (
  <Ico width="16" height="16" viewBox="0 0 16 16">
    {kind === "layers" && (
      <g fill="#3b3b3b" stroke="#c4c4c4">
        <path d="M8 9 L15 12 L8 15 L1 12 Z" />
        <path d="M8 5.6 L15 8.6 L8 11.6 L1 8.6 Z" />
        <path d="M8 2 L15 5 L8 8 L1 5 Z" fill="#c4c4c4" />
      </g>
    )}
    {kind === "mask" && (
      <>
        <rect x="1" y="2" width="13" height="12" fill="#999" />
        <circle cx="7.5" cy="8" r="3.8" fill="#3b3b3b" />
      </>
    )}
    {kind === "adj" && (
      <>
        <circle cx="8" cy="8" r="6" fill="#9a9a9a" />
        <path d="M11 3 a6 6 0 0 1 -5 10.6 Z" fill="#4a4a4a" />
      </>
    )}
    {kind === "page" && <path d="M3 1.5 H9.5 L13 5 V14.5 H3 Z M9.5 1.5 V5 H13" fill="none" stroke="#999" strokeWidth="1.2" />}
    {kind === "trash" && <path d="M3 4 H13 M6 4 V2 H10 V4 M4 5 V15 H12 V5 M6.5 6 V13 M9.5 6 V13" fill="none" stroke="#999" strokeWidth="1.2" />}
  </Ico>
);
const Nav = ({ flip, end, c = "#8a8a8a" }) => (
  <Ico width="12" height="12" viewBox="0 0 12 12">
    <g transform={flip ? "translate(12 0) scale(-1 1)" : undefined}>
      <polygon points={end ? "2,2 8,6 2,10" : "2,1.5 10,6 2,10.5"} fill={c} />
      {end && <rect x="8.5" y="2" width="1.6" height="8" fill={c} />}
    </g>
  </Ico>
);
const SwitchIcon = () => (
  <Ico width="34" height="38" viewBox="0 0 34 38">
    <circle cx="13" cy="13" r="9" fill="none" stroke="#f0e8e4" strokeWidth="4" />
    <path d="M8 6 L14 4" stroke="#cf5a55" strokeWidth="3" />
    <circle cx="20" cy="24" r="11" fill="#f2eeea" />
    <path d="M12 31 L28 17 M15 33 L30 21 M11 27 L25 15" stroke="#c9534d" strokeWidth="1.7" />
    <circle cx="5" cy="32" r="4.5" fill="#efe8e4" />
    <path d="M2 35 L8 29" stroke="#c9534d" strokeWidth="1.5" />
    <path d="M23 6 C27 5 30 8 30 12 M28 9 L30 12 L32 9 M23 6 L26 4 M23 6 L26 8" fill="none" stroke="#b4b4b4" strokeWidth="1" />
  </Ico>
);
const SmallDropper = () => (
  <Ico width="16" height="16" viewBox="0 0 16 16">
    <path d="M1 15 L8 7" stroke="#c4c4c4" strokeWidth="2" />
    <path d="M7 6 L11 2 L14 5 L10 9 Z" fill="#c28a3a" />
  </Ico>
);
const ColorsTriangle = () => (
  <Ico width="14" height="12" viewBox="0 0 14 12">
    <polygon points="7,1.5 12.5,10.5 1.5,10.5" fill="none" stroke="#111" strokeWidth="2" />
  </Ico>
);
const PaletteMenu = () => (
  <Ico width="16" height="16" viewBox="0 0 16 16" fill="none" stroke="#9a9a9a">
    <rect x=".5" y="1" width="6" height="6" />
    <rect x="9" y="1" width="6" height="6" />
    <rect x=".5" y="9" width="6" height="6" />
    <path d="M9 12 H16 M12.5 9 V15" strokeWidth="2" stroke="#c4c4c4" />
  </Ico>
);
const SearchGlass = () => (
  <Ico width="13" height="13" viewBox="0 0 13 13" fill="none" stroke="#bdbdbd" strokeWidth="1.5">
    <circle cx="5" cy="5" r="4" />
    <path d="M8 8 L12.5 12.5" strokeWidth="2" />
  </Ico>
);
const SpaceIcon = ({ kind }) => (
  <Ico width="17" height="14" viewBox="0 0 17 14">
    {kind === 0 && <><path d="M1 7 H5" stroke="#999" /><rect x="7" y="1" width="7" height="12" fill="#aaa" /></>}
    {kind === 1 && <><rect x="1" y="1" width="7" height="12" fill="#888" /><path d="M10 7 H15" stroke="#999" /></>}
    {kind === 2 && <><path d="M8 1 V5" stroke="#aaa" strokeWidth="1.5" /><rect x="2" y="6" width="13" height="7" fill="#888" /></>}
    {kind === 3 && <><rect x="2" y="4" width="13" height="9" fill="#888" /><rect x="2" y="1" width="6" height="3" fill="#666" /></>}
    {kind === 4 && <><path d="M2 2 H13 M2 5 H13 M2 8 H13 M2 11 H13" stroke="#bbb" /><path d="M1 13.5 H15" stroke="#ccc" /></>}
    {kind === 5 && <><rect x="1" y="3" width="15" height="4" fill="#999" /><rect x="7" y="7" width="3" height="6" fill="#999" /></>}
  </Ico>
);
const LinkIcon = () => (
  <Ico width="8" height="18" viewBox="0 0 8 18" fill="none" stroke="#7a7a7a" strokeWidth="1.2">
    <ellipse cx="4" cy="5" rx="2.6" ry="4" />
    <ellipse cx="4" cy="13" rx="2.6" ry="4" />
  </Ico>
);

/* ---------- data ---------- */
const MENU = ["File", "Edit", "Document", "Text", "Table", "Layer", "Select", "View", "Window", "Help"];

const LAYERS = [
  { name: "GridLines", type: "(Group)", arrow: true },
  { name: "PlayerCard", type: "(Group)", selected: true, thumb: "card" },
  { name: "CardBorder", type: "(Rounded Rec...", sub: true },
  { name: "PlayerNamePlacard", type: "(Rou...", sub: true, arrow: true, thumb: "bar" },
  { name: "Position/BattingPlacard", type: "(...", sub: true, arrow: true, thumb: "bar" },
  { name: "Position/BattingPlacard", type: "(...", sub: true, arrow: true, thumb: "bar" },
  { name: "TopTableBorder", type: "(Curve)", sub: true },
  { name: "AttributeTable", type: "(Table)", sub: true, thumb: "table" },
  { name: "MiddleTableBorder", type: "(Curve)", sub: true },
  { name: "IntangiblesTable", type: "(Table)", sub: true, thumb: "table" },
  { name: "BottomTableBorder", type: "(Curve)", sub: true },
  { name: "TeamNicknamePlacard", type: "(R...", sub: true, arrow: true, thumb: "thin" },
];

const RECENT = ["none", "#1cc0e6", "#8fc43e", "#29bde9", "#fff", "#fff200", "#222", "#fff", "#4c50a8", "#e21f26"];

const SWATCHES = [
  "#e21f26 #f26522 #f7a71b #e8e11c #a6ce39 #6cbd45 #5cb947 #5dba61 #6cc7ac #29c0ec #3f7fc8 #3b5cad #4d53a5 #7f4aa3 #b044a0 #e2379b",
  "#ee1468 #e81f25 #f26522 #f0a92c #e4dd2a #a6ce39 #64bb46 #5cb947 #62bb76 #6cc5b0 #2bbde9 #3f7fc8 #3b5cad #4d53a5 #7f4aa3 #b044a0",
  "#d7389a #ee1468 #e21f26 #e8652a #e5a32f #d6d92a #9fcd3b #68bc47 #50b848 #5dbb73 #69c3ae #2ab9e5 #3f7fc8 #3b5cad #4d53a5 #7f4aa3",
  "#b044a0 #d7389a #ea1f73 #de2b30 #e06c2f #d8a22f #cbd32e #9bc93d #5bb848 #45b549 #54ba7c #44bfae #2ab2d9 #3a7ec8 #3b5cad #6650a4",
  "#7b4fa3 #a948a0 #d23c9a #e22a74 #d13a35 #c96f34 #cea036 #c4c939 #8ec543 #59b84a #43b44b #45b87a #44bcab #2bafd0 #3a80c8 #4558ab",
].flatMap((r) => r.split(" "));

const HANDLES = [
  [89, 44], [196, 44], [301, 44],
  [89, 223], [301, 223],
  [89, 401], [196, 401], [301, 401],
  [312, 411],
];

const ArtboardDrawing = () => (
  <PageDrawing width="676" height="495" viewBox="0 0 676 495">
    <rect x="78" y="34" width="234" height="377" fill="#cfcfcf" opacity="0.22" />
    <g stroke="#707a82" strokeWidth="1.2" fill="none">
      <path d="M0 34 H676 M0 411 H676 M78 0 V495 M312 34 V495 M547 411 V495" />
    </g>
    <rect x="89" y="44" width="212" height="357" rx="6" fill="none" stroke="#d3e5f5" strokeWidth="5" />
    <g stroke="#5a5a5a" strokeWidth="2" fill="none">
      <rect x="100" y="56" width="190" height="33" rx="7" />
      <path d="M100 122 H290 M100 256 H290 M100 323 H290" strokeWidth="1.8" />
      <rect x="100" y="362" width="190" height="23" rx="6" />
    </g>
    <rect x="89" y="44" width="212" height="357" rx="6" fill="none" stroke="#3d6da6" strokeWidth="2" />
    <path d="M196 21 V44" stroke="#b6cfe3" strokeWidth="1.5" />
    <circle cx="196" cy="16" r="4.5" fill="#fff" stroke="#7ba4c7" strokeWidth="1.8" />
    {HANDLES.map(([x, y]) => (
      <g key={`${x}-${y}`}>
        <circle cx={x} cy={y} r="6" fill="#d3e5f5" />
        <circle cx={x} cy={y} r="3.8" fill="#2c6cb2" />
      </g>
    ))}
  </PageDrawing>
);

const LayerThumb = ({ kind }) => {
  if (kind === "card")
    return (
      <Thumb $card>
        <ThumbBar $w={12} $h={3} />
        <ThumbBar $w={12} $h={3} />
      </Thumb>
    );
  if (kind === "bar") return <Thumb><ThumbBar /></Thumb>;
  if (kind === "thin") return <Thumb><ThumbBar $h={3} /></Thumb>;
  if (kind === "table") return <Thumb><TableIcon size={17} line="#555" /></Thumb>;
  return <Thumb />;
};

const Section = ({ open, dark, children, h }) => (
  <SectionRow $dark={dark} $h={h}>
    <SectionArrow $open={open} />
    {children}
  </SectionRow>
);
const Field = ({ label, value, dark, dots, h }) => (
  <FieldRow $dark={dark} $h={h}>
    <FieldLabel>{label}</FieldLabel>
    <FieldValue>
      {value}
      {dots && <DotsV />}
    </FieldValue>
  </FieldRow>
);

const SpinSet = ({ iconA, iconB, iconC }) => (
  <SpinRow>
    <SpinIcon><SpaceIcon kind={iconA} /></SpinIcon>
    <SpinInput>0 mm</SpinInput>
    <Spinner />
    <SpinIcon $ml={3}><SpaceIcon kind={iconB} /></SpinIcon>
    <SpinInput $ml={0}>0 mm</SpinInput>
    <Spinner />
    <SpinIcon $ml={2}><SpaceIcon kind={iconC} /></SpinIcon>
    <SpinInput $w={37}>0 pt</SpinInput>
    <Spinner />
  </SpinRow>
);

const App = () => {
  return (
    <Screen>
      <GlobalStyle />
      <MenuBar>
        <AffinityLogo id="logoMenu" from="#e0343c" to="#f9a24b" line="#ffd9b0" />
        <MenuItems>
          {MENU.map((m) => (
            <span key={m}>{m}</span>
          ))}
        </MenuItems>
        <WindowButtons>
          <Win.Min />
          <Win.Max />
          <Win.Close />
        </WindowButtons>
      </MenuBar>

      <Toolbar>
        <Persona $w={30} $active>
          <AffinityLogo id="logoPub" size={24} from="#c9283a" to="#f9a24b" line="#ffd9b0" />
        </Persona>
        <Persona $w={44}>
          <AffinityLogo id="logoDes" size={24} from="#5d9eb3" to="#7fb0bd" line="#c7dde4" />
        </Persona>
        <Persona $w={44}>
          <AffinityLogo id="logoPho" size={24} from="#9a7fb8" to="#bba4cc" line="#e2d6ec" />
        </Persona>
        <ToolGroup $ml={32}>
          <ToolBtn $w={32}><Flower fill="#3d97dd" mark="up" /></ToolBtn>
          <ToolBtn $w={32}><Flower fill="#8fb5d4" mark="slash" /></ToolBtn>
        </ToolGroup>
        <ToolGroup $ml={28}>
          <ToolBtn><DocLines /></ToolBtn>
          <ToolBtn><DocLines round /></ToolBtn>
          <ToolBtn><FaintIcon w={9} h={12} /></ToolBtn>
        </ToolGroup>
        <ToolGroup $ml={28}>
          <ToolBtn $w={32.5}><FaintIcon w={5} h={13} /></ToolBtn>
          <ToolBtn $w={32.5}><FaintIcon w={4} h={4} /></ToolBtn>
        </ToolGroup>
        <ToolGroup $ml={29}>
          <ToolBtn $w={30}><Lasso /></ToolBtn>
        </ToolGroup>
        <ToolGroup $ml={41}>
          <ToolBtn $w={31}><BlueLines /></ToolBtn>
        </ToolGroup>
        <ToolGroup $ml={40}>
          <ToolBtn $w={28} $bg="#1d1d1d"><Magnet /></ToolBtn>
        </ToolGroup>
        <ToolGroup $ml={4}>
          <ToolBtn $w={12}><Caret /></ToolBtn>
        </ToolGroup>
        <ToolGroup $ml={29}>
          <ToolBtn><FaintIcon w={5} h={13} /></ToolBtn>
          <ToolBtn><FaintIcon w={8} h={8} /></ToolBtn>
          <ToolBtn><Stack front /></ToolBtn>
          <ToolBtn><Stack /></ToolBtn>
        </ToolGroup>
        <ToolGroup $ml={38}>
          <ToolBtn $w={30}><AlignBlue /></ToolBtn>
        </ToolGroup>
        <ToolGroup $ml={41}>
          <ToolBtn><FlipH /></ToolBtn>
          <ToolBtn><FlipV /></ToolBtn>
          <ToolBtn><Rotate ccw /></ToolBtn>
          <ToolBtn><Rotate /></ToolBtn>
        </ToolGroup>
        <ToolGroup $ml={37}>
          <ToolBtn><BoolIcon kind={0} /></ToolBtn>
          <ToolBtn><BoolIcon kind={1} /></ToolBtn>
          <ToolBtn><BoolIcon kind={2} /></ToolBtn>
        </ToolGroup>
        <ToolGroup $ml={28}>
          <ToolBtn $w={31}><Person /></ToolBtn>
        </ToolGroup>
      </Toolbar>

      <ContextBar>
        <CtxLabel $w={95}>PlayerCard (Group)</CtxLabel>
        <CtxLabel $w={26} $ml={16}>Fill:</CtxLabel>
        <NoneSwatch />
        <CtxLabel $w={44} $ml={15}>Stroke:</CtxLabel>
        <NoneSwatch />
        <StrokePreview>
          <Ico width="104" height="24" viewBox="0 0 104 24">
            <path d="M0 12 H103" stroke="#aaa" />
            <path d="M40 24 L62 0" stroke="#8a3a3a" strokeWidth="2" />
          </Ico>
          <span>None</span>
        </StrokePreview>
        <CtxButton>Ungroup</CtxButton>
        <CtxGroup $ml={17}>
          <CtxBtn $w={25}><CtxIcon kind="circle" /></CtxBtn>
          <CtxBtn $w={25}><CtxIcon kind="eye" /></CtxBtn>
          <CtxBtn $w={25}><CtxIcon kind="split" /></CtxBtn>
          <CtxBtn $w={25}><CtxIcon kind="crop" /></CtxBtn>
        </CtxGroup>
        <CtxGroup $ml={19}>
          <CtxBtn><CtxIcon kind="sync" /></CtxBtn>
        </CtxGroup>
        <CtxGroup $ml={16}>
          <CtxBtn><CtxIcon kind="al" /></CtxBtn>
          <CtxBtn><CtxIcon kind="ac" /></CtxBtn>
          <CtxBtn><CtxIcon kind="ar" /></CtxBtn>
        </CtxGroup>
        <CtxGroup $ml={13}>
          <CtxBtn $w={24.5}><CtxIcon kind="at" /></CtxBtn>
          <CtxBtn $w={24.5}><CtxIcon kind="am" /></CtxBtn>
          <CtxBtn $w={24.5}><CtxIcon kind="ab" /></CtxBtn>
        </CtxGroup>
      </ContextBar>

      <Main>
        <ToolColumn>
          <ToolSlot $active><Pointer /></ToolSlot>
          <ToolSlot><NodePointer /></ToolSlot>
          <ToolSep />
          <ToolSlot><ToolIcons.Text /></ToolSlot>
          <ToolSlot><TableIcon /></ToolSlot>
          <ToolSlot><SerifGlyph>A</SerifGlyph></ToolSlot>
          <ToolSlot><ToolIcons.Pen /></ToolSlot>
          <ToolSlot><ToolIcons.Rect /></ToolSlot>
          <ToolSlot><ToolIcons.Frame /></ToolSlot>
          <ToolSlot><ToolIcons.Ellipse /></ToolSlot>
          <ToolSlot><ToolIcons.Image /></ToolSlot>
          <ToolSlot><ToolIcons.Place /></ToolSlot>
          <ToolSep />
          <ToolSlot><ToolIcons.Crop /></ToolSlot>
          <ToolSep />
          <ToolSlot><ToolIcons.Wheel /></ToolSlot>
          <ToolSlot><ToolIcons.Glass /></ToolSlot>
          <ToolSlot><ToolIcons.Dropper /></ToolSlot>
          <ToolSep />
          <ToolSlot><ToolIcons.Hand /></ToolSlot>
          <ToolSlot><ToolIcons.Zoom /></ToolSlot>
        </ToolColumn>

        <LayersPanel>
          <TabBar $h={23}>
            <Grip />
            <Tab $lift={3}>Pages</Tab>
            <Tab $lift={3} $active>Layers</Tab>
            <Tab $lift={3}>Assets</Tab>
            <Tab $lift={3}>Preflight</Tab>
            <TabMenu />
          </TabBar>
          <LayerOptions>
            <OptionLabel>Opacity:</OptionLabel>
            <DarkSelect $w={69}>100 %<Caret /></DarkSelect>
            <DarkSelect $w={81} $ml={5}>Passthrough<Caret /></DarkSelect>
            <OptionIcon $ml={4}><Gear /></OptionIcon>
            <OptionIcon $ml={9}><Lock /></OptionIcon>
          </LayerOptions>
          <LayerList>
            {LAYERS.map((l, i) => (
              <LayerRow key={i} $selected={l.selected}>
                <ArrowSlot $sub={l.sub}>
                  {l.selected ? <ExpandedDot /> : l.arrow ? <TriRight /> : null}
                </ArrowSlot>
                <LayerThumb kind={l.thumb} />
                <LayerName $sub={l.sub}>
                  <NameStrong $selected={l.selected}>{l.name}</NameStrong>
                  <NameType $selected={l.selected}>{l.type}</NameType>
                </LayerName>
                <CheckBox $faded={l.selected}>
                  <Tick2 c={l.selected ? "#9dbbe4" : "#d8d8d8"} />
                </CheckBox>
              </LayerRow>
            ))}
          </LayerList>
          <LayerFooter>
            <FooterBtn $active><FootIcon kind="layers" /></FooterBtn>
            <FooterBtn $ml={56}><FootIcon kind="mask" /></FooterBtn>
            <FooterBtn><FootIcon kind="adj" /></FooterBtn>
            <FooterBtn>fx</FooterBtn>
            <FooterBtn $ml={57}><FootIcon kind="page" /></FooterBtn>
            <FooterBtn><FootIcon kind="trash" /></FooterBtn>
          </LayerFooter>
        </LayersPanel>

        <CanvasColumn>
          <DocTab>
            <span>HowToUseDataMerge [Modified] (150.0%)</span>
            <Win.Close />
          </DocTab>
          <CanvasMiddle>
            <Pasteboard>
              <Page>
                <ArtboardDrawing />
                <FieldsPanel>
                  <FieldsHead>
                    <Grip />
                    <Tab $lift={3} $active>Fields</Tab>
                    <FieldsClose><Win.Close /></FieldsClose>
                  </FieldsHead>
                  <FieldsBody>
                    <FieldsRows>
                      <Section open dark h={18.8}>Document Information</Section>
                      <Field label="Author:" h={24.4} />
                      <Field label="Tags:" />
                      <Field label="Comments:" />
                      <Field label="Title:" value="HowToUseDataMerge" />
                      <Field label="Subject:" />
                      <Field label="Revision:" h={21} />
                      <Section dark>Document Statistics</Section>
                      <Section dark>Document Sections</Section>
                      <Section open dark>Continuation</Section>
                      <Field label="Previous Frame:" value="<Page number>" h={23.5} />
                      <Field label="Next Frame:" value="<Page number>" h={23.5} />
                      <Section open dark h={18}>General Information</Section>
                      <Field label="Date & Time:" value="<Current Date & Time>" dots dark h={25} />
                      <Section open dark h={16}>Data Merge</Section>
                      <Field label="Source:" value="<Name>" h={28} />
                      <Field label="Merge Index:" value="<Index>" h={21} />
                      <Field label="Unfiltered Index:" value="<Index>" h={23.5} />
                    </FieldsRows>
                    <FieldsScroll>
                      <ScrollTriUp />
                      <FieldsThumb />
                      <ScrollTriDown />
                    </FieldsScroll>
                  </FieldsBody>
                </FieldsPanel>
              </Page>
            </Pasteboard>
            <VBar>
              <VThumb />
              <ScrollTriDown />
            </VBar>
          </CanvasMiddle>
          <HBar>
            <TriLeft />
            <HThumb />
            <TriRightSmall />
          </HBar>
        </CanvasColumn>

        <RightColumn>
          <SwatchPanel>
            <TabBar>
              <Grip />
              <Tab $lift={2}>Color</Tab>
              <Tab $lift={2} $active>Swatches</Tab>
              <Tab $lift={2}>Stroke</Tab>
              <TabMenu />
            </TabBar>
            <SwatchHead>
              <SwitchIcon />
              <DropperWrap><SmallDropper /></DropperWrap>
              <RedDot />
              <HeadLabel>Opacity:</HeadLabel>
              <DarkSelect $w={55} $ml={5}>100 %<Caret /></DarkSelect>
            </SwatchHead>
            <RecentRow>
              <RecentLabel>Recent:</RecentLabel>
              <RecentStrip>
                {RECENT.map((c, i) =>
                  c === "none" ? <NoneSwatch key={i} $w={13.2} $h={15} /> : <Chip key={i} $c={c} />
                )}
              </RecentStrip>
            </RecentRow>
            <PaletteRow>
              <PaletteSelect>
                <ColorsTriangle />
                <span>Colors</span>
                <PaletteCaret />
              </PaletteSelect>
              <PaletteMenuWrap><PaletteMenu /></PaletteMenuWrap>
              <MiniChips>
                <NoneSwatch $w={13.2} $h={13} />
                <MiniChip $c="#222" />
                <MiniChip $c="#999" />
                <MiniChip $c="#fff" />
              </MiniChips>
            </PaletteRow>
            <SwatchArea>
              <SwatchGrid>
                {SWATCHES.map((c, i) => (
                  <Swatch key={i} $c={c} $sel={i === 0} />
                ))}
              </SwatchGrid>
              <SwatchScroll>
                <ScrollTriUp />
                <SwatchThumb />
                <ScrollTriDown />
              </SwatchScroll>
            </SwatchArea>
            <SearchBox>
              <SearchGlass />
              <span>Search</span>
            </SearchBox>
          </SwatchPanel>

          <ParagraphPanel>
            <TabBar $h={20}>
              <Grip />
              <Tab>Table</Tab>
              <Tab>Character</Tab>
              <Tab $active>Paragraph</Tab>
              <Tab>Text Styles</Tab>
            </TabBar>
            <AlignRow>
              <AlignBtn $active />
              {[...Array(8)].map((_, i) => (
                <AlignBtn key={i} />
              ))}
            </AlignRow>
            <StyleSelect>
              <span>[No Style]</span>
              <Caret />
            </StyleSelect>
            <SpacingWrap>
              <SpacingBody>
                <SpacingHead>
                  <SpacingArrow $open />
                  <span>Spacing</span>
                </SpacingHead>
                <LeadingRow>
                  <span>Leading:</span>
                  <DarkSelect $w={132}>[12.4 pt]<Caret /></DarkSelect>
                </LeadingRow>
                <SpinSet iconA={0} iconB={1} iconC={2} />
                <SpinSet iconA={3} iconB={4} iconC={5} />
                <SpaceRow>
                  <Tick $off />
                  <SpaceLabel>Space between same styles:</SpaceLabel>
                  <SpinInput $w={37} $off>0 pt</SpinInput>
                  <Spinner />
                </SpaceRow>
                <SpaceRow $mt={3}>
                  <Tick />
                  <span>Sum space before and after</span>
                </SpaceRow>
              </SpacingBody>
              <SpacingScroll>
                <ScrollTriUp />
                <SpacingThumb />
                <ScrollTriDown />
              </SpacingScroll>
            </SpacingWrap>
          </ParagraphPanel>

          <TransformPanel>
            <TabBar $h={22}>
              <Grip />
              <Tab $active>Transform</Tab>
              <Tab>History</Tab>
              <Tab>Navigator</Tab>
            </TabBar>
            <TransformBody>
              <Anchor>
                {[0, 1, 2, 3, 4, 5, 6, 7, 8].map((d) => (
                  <AnchorDot key={d} $on={d === 0} />
                ))}
              </Anchor>
              <div>
                <TransformGrid>
                  <TfLabel>X:</TfLabel>
                  <TfInput>16 mm</TfInput>
                  <TfLabel>W:</TfLabel>
                  <TfInput>38 mm</TfInput>
                  <span />
                  <TfLabel>Y:</TfLabel>
                  <TfInput>8 mm</TfInput>
                  <TfLabel>H:</TfLabel>
                  <TfInput>64 mm</TfInput>
                  <LinkIcon />
                </TransformGrid>
                <TransformGrid $mt={10}>
                  <TfLabel>R:</TfLabel>
                  <TfInput>0 °<Caret /></TfInput>
                  <TfLabel>S:</TfLabel>
                  <TfInput>0 °<Caret /></TfInput>
                </TransformGrid>
              </div>
            </TransformBody>
          </TransformPanel>
        </RightColumn>
      </Main>

      <StatusBar>
        <StatusIcon $mr={5}><Nav flip end /></StatusIcon>
        <StatusIcon><Nav flip /></StatusIcon>
        <PageOf>1 of 1</PageOf>
        <StatusIcon $mr={5}><Nav c="#e0e0e0" /></StatusIcon>
        <StatusIcon $mr={7}><Nav end /></StatusIcon>
        <StatusIcon $mr={14}>
          <Ico width="12" height="13" viewBox="0 0 12 13" fill="none" stroke="#bbb">
            <rect x="1" y=".5" width="10" height="12" />
            <path d="M3 3.5 H9 M3 6 H9 M3 8.5 H9" />
          </Ico>
        </StatusIcon>
        <StatusIcon $mr={13}>
          <Ico width="11" height="12" viewBox="0 0 11 12">
            <path d="M1 10 C1 4 2 1 5.5 1 C9 1 10 4 10 10 Z" fill="#f0d020" />
            <rect y="10" width="11" height="2" fill="#e8a820" />
          </Ico>
        </StatusIcon>
        <StatusText>
          'PlayerCard' selected. <b>Drag</b> to move selection. <b>Click</b> another object to select it. <b>Click</b> on an empty area to deselect selection.
        </StatusText>
        <Recorder>
          <Ico width="19" height="20" viewBox="0 0 19 20">
            <rect x="1" y="1" width="17" height="14" fill="#f0e6f4" stroke="#fff" />
            <rect x="4" y="4" width="7" height="8" fill="#5a2f74" />
            <polygon points="11,8 15,5 15,11" fill="#5a2f74" />
            <path d="M9.5 15 V18 M5 19 H14" stroke="#fff" strokeWidth="1.5" />
          </Ico>
          <Ico width="12" height="14" viewBox="0 0 12 14">
            <rect x="1" y="1" width="4" height="12" fill="#5b7fd0" />
            <rect x="7" y="1" width="4" height="12" fill="#5b7fd0" />
          </Ico>
          <Ico width="12" height="12" viewBox="0 0 12 12">
            <rect x="1" y="1" width="10" height="10" fill="#d9292a" />
          </Ico>
          <Ico width="10" height="12" viewBox="0 0 10 12">
            <polygon points="2,1 9,6 2,11" fill="#a99ab8" />
          </Ico>
          <span>0:05:55</span>
          <Ico width="11" height="11" viewBox="0 0 11 11">
            <rect width="11" height="11" fill="#4b4bb0" />
            <polygon points="3,4 8,4 5.5,7.5" fill="#e6e6f4" />
          </Ico>
        </Recorder>
      </StatusBar>

      <CursorSpot />
      <CursorArrow width="13" height="20" viewBox="0 0 13 20">
        <path d="M1 1 V16 L4.6 12.6 L7 18 L9.4 17 L7 11.8 L12 11.5 Z" fill="#fff" stroke="#222" strokeWidth=".8" />
      </CursorArrow>
    </Screen>
  );
};

export default App;
